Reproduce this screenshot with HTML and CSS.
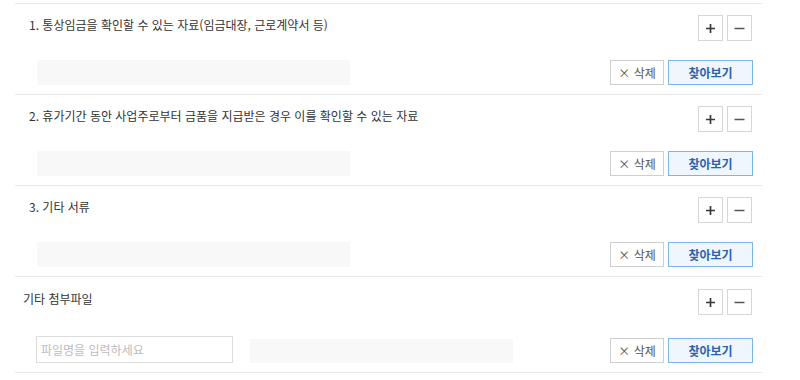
FILE: index.html
```html
<!DOCTYPE html>
<html lang="ko">
<head>
<meta charset="utf-8">
<link rel="stylesheet" href="styles.css">
</head>
<body>
<div class="list">
  <div class="row">
    <div class="head">
      <span class="title num">1. 통상임금을 확인할 수 있는 자료(임금대장, 근로계약서 등)</span>
      <div class="pm">
        <button class="sq"><svg width="11" height="11" viewBox="0 0 11 11"><path d="M5.5 1v9M1 5.5h9" stroke="#3a3a3a" stroke-width="1.7"/></svg></button>
        <button class="sq"><svg width="11" height="11" viewBox="0 0 11 11"><path d="M0.5 5.5h10" stroke="#555" stroke-width="1.5"/></svg></button>
      </div>
    </div>
    <div class="foot">
      <div class="filebox"></div>
      <div class="acts"><button class="del">× 삭제</button><button class="find">찾아보기</button></div>
    </div>
  </div>
  <div class="row">
    <div class="head">
      <span class="title num">2. 휴가기간 동안 사업주로부터 금품을 지급받은 경우 이를 확인할 수 있는 자료</span>
      <div class="pm">
        <button class="sq"><svg width="11" height="11" viewBox="0 0 11 11"><path d="M5.5 1v9M1 5.5h9" stroke="#3a3a3a" stroke-width="1.7"/></svg></button>
        <button class="sq"><svg width="11" height="11" viewBox="0 0 11 11"><path d="M0.5 5.5h10" stroke="#555" stroke-width="1.5"/></svg></button>
      </div>
    </div>
    <div class="foot">
      <div class="filebox"></div>
      <div class="acts"><button class="del">× 삭제</button><button class="find">찾아보기</button></div>
    </div>
  </div>
  <div class="row">
    <div class="head">
      <span class="title num">3. 기타 서류</span>
      <div class="pm">
        <button class="sq"><svg width="11" height="11" viewBox="0 0 11 11"><path d="M5.5 1v9M1 5.5h9" stroke="#3a3a3a" stroke-width="1.7"/></svg></button>
        <button class="sq"><svg width="11" height="11" viewBox="0 0 11 11"><path d="M0.5 5.5h10" stroke="#555" stroke-width="1.5"/></svg></button>
      </div>
    </div>
    <div class="foot">
      <div class="filebox"></div>
      <div class="acts"><button class="del">× 삭제</button><button class="find">찾아보기</button></div>
    </div>
  </div>
  <div class="row last">
    <div class="head">
      <span class="title etc">기타 첨부파일</span>
      <div class="pm">
        <button class="sq"><svg width="11" height="11" viewBox="0 0 11 11"><path d="M5.5 1v9M1 5.5h9" stroke="#3a3a3a" stroke-width="1.7"/></svg></button>
        <button class="sq"><svg width="11" height="11" viewBox="0 0 11 11"><path d="M0.5 5.5h10" stroke="#555" stroke-width="1.5"/></svg></button>
      </div>
    </div>
    <div class="foot">
      <input class="name" type="text" placeholder="파일명을 입력하세요">
      <div class="filebox wide"></div>
      <div class="acts"><button class="del">× 삭제</button><button class="find">찾아보기</button></div>
    </div>
  </div>
</div>
</body>
</html>
```
FILE: styles.css
```css
* { box-sizing: border-box; }
body {
  margin: 0;
  background: #fff;
  font-family: "Noto Sans CJK KR", "Noto Sans", sans-serif;
  font-size: 12px;
  color: #333;
}
.list {
  margin: 3px 0 0 15px;
  width: 747px;
  border-top: 1px solid #e8e8e8;
}
.row {
  border-bottom: 1px solid #e8e8e8;
  padding: 11px 10px 9px 0;
}
.row.last { padding-top: 12px; }
.head {
  display: flex;
  justify-content: space-between;
  align-items: center;
  height: 26px;
}
.title {
  color: #333;
  position: relative;
  top: -4px;
}
.title.num { padding-left: 14px; }
.title.etc { padding-left: 8px; }
.pm { display: flex; gap: 4px; }
.sq {
  width: 25px;
  height: 26px;
  border: 1px solid #d6d6d6;
  background: #fff;
  padding: 0;
  display: flex;
  align-items: center;
  justify-content: center;
}
.foot {
  display: flex;
  align-items: center;
  margin-top: 19px;
  padding-left: 22px;
  height: 25px;
}
.last .foot { margin-top: 20px; height: 28px; padding-left: 21px; }
.filebox {
  width: 313px;
  height: 25px;
  background: #f8f8f8;
}
.filebox.wide { width: 263px; height: 24px; margin-left: 17px; margin-top: 3px; }
.name {
  width: 197px;
  height: 27px;
  border: 1px solid #dcdcdc;
  padding: 0 0 0 4px;
  font-family: inherit;
  font-size: 12px;
  color: #333;
}
.name::placeholder { color: #bbb; }
.acts {
  margin-left: auto;
  display: flex;
  gap: 4px;
  margin-right: -1px;
}
.last .acts { margin-top: 3px; }
.del, .find {
  height: 25px;
  font-family: inherit;
  font-size: 12px;
  padding: 0;
}
.del {
  width: 54px;
  border: 1px solid #cfcfcf;
  background: #fff;
  color: #555;
}
.find {
  width: 85px;
  border: 1px solid #7bb7e6;
  background: #eff6fd;
  color: #2b62ad;
  font-weight: bold;
}
```
